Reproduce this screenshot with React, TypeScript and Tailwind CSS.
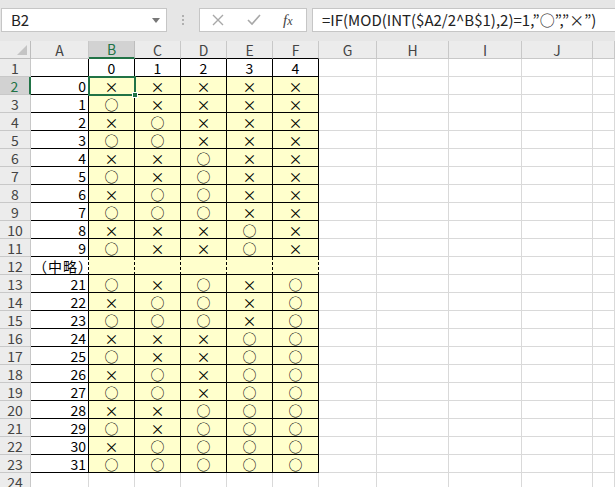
import React from "react";
import clsx from "clsx";

const FONT = { fontFamily: '"Noto Sans CJK JP", "Liberation Sans", sans-serif' };

const COL_W = [
  "w-[31px]",
  "w-[58px]",
  "w-[46px]",
  "w-[46px]",
  "w-[46px]",
  "w-[46px]",
  "w-[46px]",
  "w-[58px]",
  "w-[72px]",
  "w-[73px]",
  "w-[71px]",
  "w-[22px]",
];
const LETTERS = ["", "A", "B", "C", "D", "E", "F", "G", "H", "I", "J", ""];

function rowValue(r: number): number | null {
  if (r >= 2 && r <= 11) return r - 2;
  if (r >= 13 && r <= 23) return r + 8;
  return null;
}

function cellText(r: number, c: number): string {
  if (c === 1) {
    if (r === 12) return "（中略）";
    const v = rowValue(r);
    return v === null ? "" : String(v);
  }
  if (c >= 2 && c <= 6) {
    if (r === 1) return String(c - 2);
    const v = rowValue(r);
    if (v === null) return "";
    return (v >> (c - 2)) & 1 ? "○" : "×";
  }
  return "";
}

function Cell({ r, c }: { r: number; c: number }) {
  const inTable = r >= 1 && r <= 23 && c >= 1 && c <= 6;
  const yellow = r >= 2 && r <= 23 && c >= 2 && c <= 6;
  const text = cellText(r, c);
  return (
    <div
      className={clsx(
        COL_W[c],
        "h-[18px] shrink-0 border-r border-b flex items-center overflow-visible whitespace-nowrap text-[14px] leading-none text-black",
        inTable ? "border-black" : "border-[#d9d9d9]",
        yellow ? "bg-[#ffffcc]" : "bg-white",
        r === 12 && inTable && "[border-right-style:dashed]",
        c === 1 && r !== 12 && "justify-end pr-[2px]",
        c === 1 && r === 12 && "justify-start pl-[2px] tracking-[1px]",
        c >= 2 && c <= 6 && "justify-center",
        text === "×" && "text-[#222]"
      )}
    >
      {text}
    </div>
  );
}

function TopBar() {
  return (
    <div className="h-[41px] bg-[#e6e6e6] flex items-start pt-[8px]">
      <div className="ml-[1px] w-[166px] h-[24px] bg-white border border-[#c6c6c6] flex items-center justify-between pl-[9px] pr-[6px]">
        <span className="text-[15px] text-[#222]">B2</span>
        <svg width="8" height="5" viewBox="0 0 8 5">
          <path d="M0 0 L8 0 L4 5 Z" fill="#777" />
        </svg>
      </div>
      <div className="w-[32px] h-[24px] flex flex-col items-center justify-center gap-[2px]">
        <span className="w-[2px] h-[2px] bg-[#b0b0b0]" />
        <span className="w-[2px] h-[2px] bg-[#b0b0b0]" />
        <span className="w-[2px] h-[2px] bg-[#b0b0b0]" />
      </div>
      <div className="w-[108px] h-[24px] bg-white border border-[#c6c6c6] flex items-center">
        <svg className="ml-[12px]" width="12" height="12" viewBox="0 0 12 12">
          <path d="M1 1 L11 11 M11 1 L1 11" stroke="#a8a8a8" strokeWidth="1.4" />
        </svg>
        <svg className="ml-[23px]" width="14" height="12" viewBox="0 0 14 12">
          <path d="M1 6 L5 10 L13 1" stroke="#a8a8a8" strokeWidth="1.6" fill="none" />
        </svg>
        <span
          className="ml-[22px] text-[15px] italic text-[#444]"
          style={{ fontFamily: '"Liberation Serif", serif' }}
        >
          f<span className="text-[12px]">x</span>
        </span>
      </div>
      <div className="ml-[5px] flex-1 h-[24px] bg-white border border-r-0 border-[#c6c6c6] flex items-center pl-[9px] text-[15px] text-[#222] whitespace-nowrap overflow-hidden">
        =IF(MOD(INT($A2/2^B$1),2)=1,”○”,”×”)
      </div>
    </div>
  );
}

function HeaderRow() {
  return (
    <div className="flex">
      {LETTERS.map((l, c) => {
        if (c === 0) {
          return (
            <div
              key={c}
              className="w-[31px] h-[18px] shrink-0 bg-[#ececec] border-r border-b border-[#bdbdbd] flex items-end justify-end pr-[3px] pb-[3px]"
            >
              <svg width="10" height="10" viewBox="0 0 10 10">
                <path d="M10 0 L10 10 L0 10 Z" fill="#c4c4c4" />
              </svg>
            </div>
          );
        }
        const sel = c === 2;
        return (
          <div
            key={c}
            className={clsx(
              COL_W[c],
              "h-[18px] shrink-0 border-r flex items-center justify-center text-[14px] leading-none",
              sel
                ? "bg-[#d2d2d2] border-r-[#bdbdbd] border-b-2 border-b-[#217346] text-[#217346]"
                : "bg-[#ececec] border-[#c8c8c8] border-b text-[#444]",
              c >= 3 && c <= 6 && "border-b-black"
            )}
          >
            {l}
          </div>
        );
      })}
    </div>
  );
}

function BodyRow({ r }: { r: number }) {
  const sel = r === 2;
  return (
    <div className="flex">
      <div
        className={clsx(
          "w-[31px] h-[18px] shrink-0 border-b flex items-center justify-center text-[14px] leading-none",
          sel
            ? "bg-[#d2d2d2] border-r-2 border-r-[#217346] border-b-[#c8c8c8] text-[#217346]"
            : "bg-[#ececec] border-r border-[#c8c8c8] text-[#444]"
        )}
      >
        {r}
      </div>
      {LETTERS.slice(1).map((_, i) => (
        <Cell key={i} r={r} c={i + 1} />
      ))}
    </div>
  );
}

export default function App() {
  const rows = Array.from({ length: 24 }, (_, i) => i + 1);
  return (
    <div className="w-[615px] h-[487px] overflow-hidden bg-white" style={FONT}>
      <TopBar />
      <div className="relative">
        <HeaderRow />
        {rows.map((r) => (
          <BodyRow key={r} r={r} />
        ))}
        <div className="absolute left-[88px] top-[35px] w-[48px] h-[20px] border-2 border-[#217346] pointer-events-none" />
        <div className="absolute left-[132px] top-[51px] w-[6px] h-[6px] bg-[#217346] border border-white" />
      </div>
    </div>
  );
}
